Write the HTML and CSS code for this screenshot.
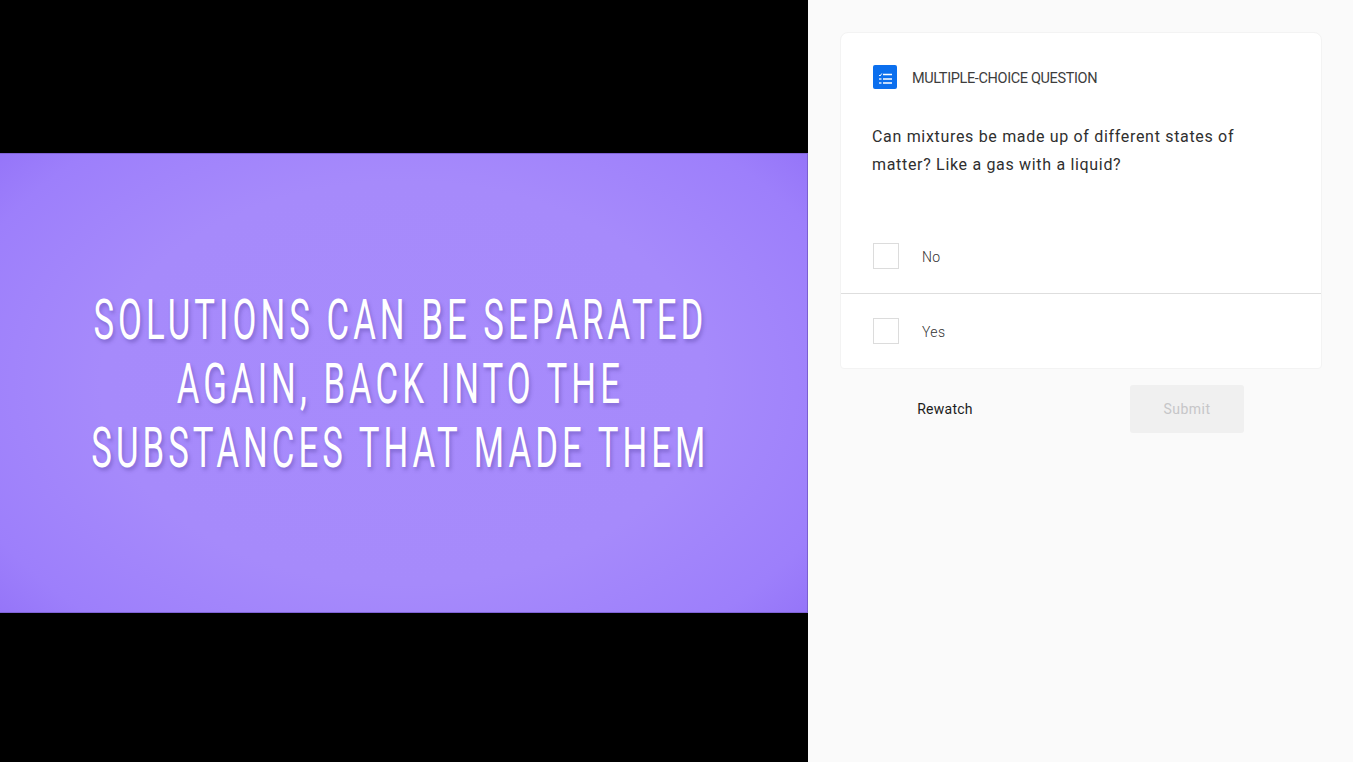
FILE: index.html
```html
<!DOCTYPE html>
<html lang="en">
<head>
<meta charset="utf-8">
<title>Multiple-choice question</title>
<link rel="stylesheet" href="styles.css">
</head>
<body>
<main class="layout">
  <section class="player">
    <div class="video">
      <p class="slide-text">SOLUTIONS CAN BE SEPARATED<br>AGAIN, BACK INTO THE<br>SUBSTANCES THAT MADE THEM</p>
    </div>
  </section>
  <aside class="panel">
    <div class="card">
      <header class="card-head">
        <span class="badge">
          <svg width="24" height="24" viewBox="0 0 24 24" fill="none" stroke="#fff">
            <path d="M10 9.500h9M10 14h9M10 18h9" stroke-width="1.300"/>
            <path d="M6 10l1 1 1.800-2.500" stroke-width="1"/>
            <path d="M6 14h2.500" stroke-width="1.300"/>
            <path d="M6 18h2.500" stroke-width="1.300"/>
          </svg>
        </span>
        <span class="kind">MULTIPLE-CHOICE QUESTION</span>
      </header>
      <p class="question">Can mixtures be made up of different states of<br>matter? Like a gas with a liquid?</p>
      <ul class="options">
        <li class="option"><span class="check"></span><span class="label">No</span></li>
        <li class="option"><span class="check"></span><span class="label">Yes</span></li>
      </ul>
    </div>
    <div class="actions">
      <button class="btn rewatch" type="button">Rewatch</button>
      <button class="btn submit" type="button" disabled>Submit</button>
    </div>
  </aside>
</main>
</body>
</html>
```

FILE: styles.css
```css
* { box-sizing: border-box; }
html, body { margin: 0; height: 100%; overflow: hidden; }
body { font-family: Roboto, "Noto Sans", sans-serif; color: #2b2b2b; }
.layout { display: flex; height: 762px; }

.player { width: 808px; background: #000; display: flex; align-items: center; padding-top: 4px; }
.video {
  width: 808px; height: 460px;
  display: flex; align-items: center; justify-content: center;
  overflow: hidden;
  padding-right: 6px;
  background: radial-gradient(ellipse 68% 80% at 50% 50%, #a78bfc 0%, #a68afb 55%, #9d7ffb 85%, #9372f8 100%);
  border-top: 1px solid #7f63d6;
  border-bottom: 1px solid #7f63d6;
  border-right: 1px solid #7a5fd0;
}
.slide-text {
  margin: 2px 0 0;
  flex: none;
  white-space: nowrap;
  text-align: center;
  font-family: Roboto, sans-serif;
  font-weight: 400;
  font-size: 56px;
  line-height: 64px;
  letter-spacing: 6.500px;
  color: #fff;
  text-shadow: 3px 3px 5px rgba(70, 50, 140, .35);
  transform: scaleX(.62);
}

.panel { flex: 1; background: #fafafa; padding: 32px 31px 0 32px; }
.card {
  height: 337px;
  background: #fff;
  border: 1px solid #f3f3f3;
  border-radius: 8px 8px 4px 4px;
  padding-top: 32px;
}
.card-head { display: flex; align-items: center; gap: 15px; padding-left: 32px; height: 24px; }
.badge { width: 24px; height: 24px; background: #0b6fee; border-radius: 2px; display: block; }
.badge svg { display: block; }
.kind { font-size: 14.500px; letter-spacing: -.36px; color: #3d3d3d; padding-top: 2px; }
.question {
  margin: 34px 0 0 31px;
  font-size: 16px;
  line-height: 28px;
  font-weight: 400;
  letter-spacing: .68px;
  color: #2f2f2f;
}
.options { list-style: none; margin: 40px 0 0; padding: 0; }
.option { height: 74px; display: flex; align-items: center; padding-left: 32px; gap: 23px; }
.option:first-child { height: 75px; border-bottom: 1px solid #dedede; }
.check { width: 26px; height: 26px; border: 1px solid #dcdcdc; background: #fff; }
.label { font-size: 14px; font-weight: 300; letter-spacing: .4px; color: #333; padding-top: 2px; }

.actions { display: flex; align-items: center; height: 48px; margin-top: 16px; }
.btn { font-family: inherit; font-size: 14px; border: 0; border-radius: 3px; height: 48px; letter-spacing: .25px; font-weight: 400; }
.rewatch { width: 114px; margin-left: 48px; background: transparent; color: #1c1c1c; }
.submit { width: 114px; margin-left: 128px; background: #f0f0f0; color: #c6c6c8; letter-spacing: .5px; }
```
